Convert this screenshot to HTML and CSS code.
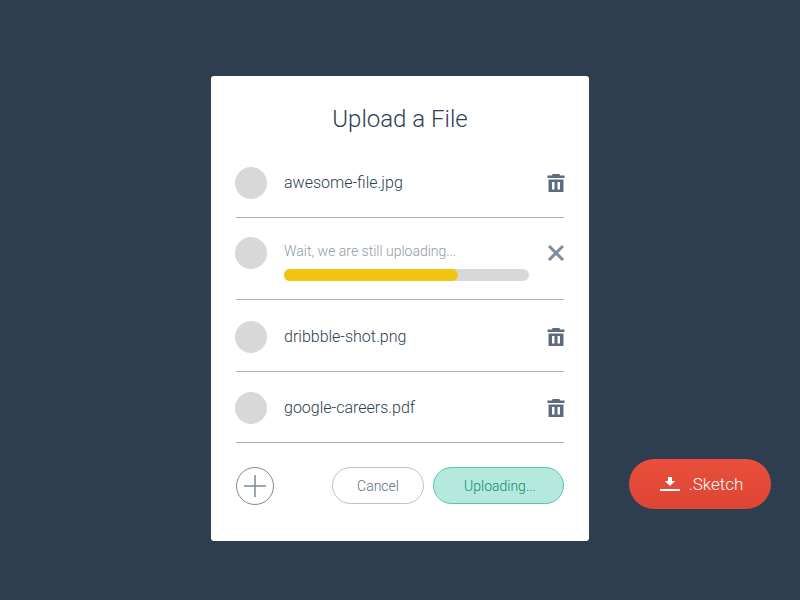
FILE: index.html

```html
<!DOCTYPE html>
<html lang="en">
<head>
  <meta charset="UTF-8" />
  <meta name="viewport" content="width=device-width, initial-scale=1.0"/>
  <title>Upload a File</title>
  <link rel="stylesheet" href="styles.css">
</head>
<body>
  <div class="stage">
    <div class="modal">
      <h1>Upload a File</h1>

      <div class="file file-first">
        <div class="thumb"></div>
        <div class="name">awesome-file.jpg</div>
        <svg class="icon" width="18" height="18" viewBox="0 0 18 18"><path class="fill" d="M5.500 0h7l.5 1.500h4.500v2.500H.5V1.500H5zM1.500 5.500h15V18h-15zM5 8v7.500h2.500V8zM10.500 8v7.500H13V8z" fill-rule="evenodd"/></svg>
      </div>

      <div class="file file-uploading">
        <div class="thumb"></div>
        <div class="progress-wrap">
          <div class="wait">Wait, we are still uploading...</div>
          <div class="track"><div class="bar" style="width: 71%"></div></div>
        </div>
        <svg class="icon icon-x" width="18" height="18" viewBox="0 0 18 18"><path d="M2 2l14 14M16 2L2 16"/></svg>
      </div>

      <div class="file file-third">
        <div class="thumb"></div>
        <div class="name">dribbble-shot.png</div>
        <svg class="icon" width="18" height="18" viewBox="0 0 18 18"><path class="fill" d="M5.500 0h7l.5 1.500h4.500v2.500H.5V1.500H5zM1.500 5.500h15V18h-15zM5 8v7.500h2.500V8zM10.500 8v7.500H13V8z" fill-rule="evenodd"/></svg>
      </div>

      <div class="file file-fourth">
        <div class="thumb"></div>
        <div class="name">google-careers.pdf</div>
        <svg class="icon" width="18" height="18" viewBox="0 0 18 18"><path class="fill" d="M5.500 0h7l.5 1.500h4.500v2.500H.5V1.500H5zM1.500 5.500h15V18h-15zM5 8v7.500h2.500V8zM10.500 8v7.500H13V8z" fill-rule="evenodd"/></svg>
      </div>

      <div class="footer">
        <div class="add">
          <svg width="22" height="22" viewBox="0 0 22 22"><path d="M11 0v22M0 11h22"/></svg>
        </div>
        <div class="btn btn-cancel">Cancel</div>
        <div class="btn btn-upload">Uploading...</div>
      </div>
    </div>

    <div class="sketch">
      <svg width="20" height="14" viewBox="0 0 20 14"><path d="M8 0h4v4h3L10 9 5 4h3zM0 12h20v2H0z"/></svg>
      <span>.Sketch</span>
    </div>
  </div>
</body>
</html>
```

FILE: styles.css

```css
:root {
  --bg-color: #2c3e50;
  --text-color: #2c3e50;
  --line-color: #a9b0b8;
  --thumb-color: #d8d8d8;
  --icon-color: #5d6d7e;
}

html, body {
  height: 100%;
}

body {
  margin: 0;
  padding: 0;
  font-family: Roboto, sans-serif;
  font-weight: 300;
  background: var(--bg-color);
  color: var(--text-color);
}

.stage {
  display: flex;
  align-items: flex-start;
  padding: 76px 0 0 211px;
}

.modal {
  box-sizing: border-box;
  width: 378px;
  height: 465px;
  padding: 0 25px;
  background: #fff;
  border-radius: 3px;
}

h1 {
  margin: 0;
  padding-top: 28px;
  height: 64px;
  box-sizing: border-box;
  font-size: 24px;
  line-height: 30px;
  font-weight: 300;
  text-align: center;
}

.file {
  display: flex;
  align-items: center;
  padding-bottom: 18px;
  border-bottom: 1px solid var(--line-color);
}

.file-first {
  margin-top: 27px;
}

.file-uploading {
  padding-top: 19px;
  align-items: flex-start;
}

.file-third {
  padding-top: 21px;
}

.file-fourth {
  padding-top: 20px;
}

.thumb {
  flex: none;
  width: 32px;
  height: 32px;
  margin-left: -1px;
  border-radius: 50%;
  background: var(--thumb-color);
}

.name {
  flex: 1;
  margin-left: 17px;
  font-size: 16px;
  line-height: 32px;
}

.icon {
  flex: none;
  margin-right: -1px;
}

.fill {
  fill: var(--icon-color);
}

.icon-x {
  margin-top: 7px;
  margin-right: -1px;
  margin-left: auto;
}

.icon-x path {
  fill: none;
  stroke: #7f8c9a;
  stroke-width: 3;
}

.progress-wrap {
  width: 245px;
  margin-left: 17px;
}

.wait {
  font-size: 14px;
  line-height: 28px;
  color: #8f9aa6;
}

.track {
  height: 12px;
  margin-top: 4px;
  background: var(--thumb-color);
  border-radius: 6px;
}

.bar {
  height: 12px;
  background: #f1c40f;
  border-radius: 6px;
}

.footer {
  display: flex;
  align-items: flex-start;
  margin-top: 24px;
}

.add {
  box-sizing: border-box;
  width: 38px;
  height: 38px;
  margin-right: auto;
  border: 1px solid #7f8a96;
  border-radius: 50%;
  display: flex;
  align-items: center;
  justify-content: center;
}

.add path {
  fill: none;
  stroke: #7f8a96;
  stroke-width: 1.500;
}

.btn {
  box-sizing: border-box;
  height: 37px;
  border-radius: 19px;
  font-size: 14px;
  line-height: 37px;
  text-align: center;
}

.btn-cancel {
  width: 92px;
  border: 1px solid #bcc2c8;
  color: #5d6d7e;
}

.btn-upload {
  width: 131px;
  margin-left: 9px;
  padding-left: 3px;
  border: 1px solid #4fc9ab;
  background: #b5e9de;
  color: #128a70;
}

.sketch {
  display: flex;
  align-items: center;
  justify-content: center;
  gap: 9px;
  width: 142px;
  height: 50px;
  margin: 383px 0 0 40px;
  padding-left: 3px;
  box-sizing: border-box;
  border-radius: 25px;
  background: linear-gradient(to bottom, #ea4f3d, #dc4433);
  color: #fff;
  font-size: 17px;
}

.sketch svg {
  fill: #fff;
}
```
